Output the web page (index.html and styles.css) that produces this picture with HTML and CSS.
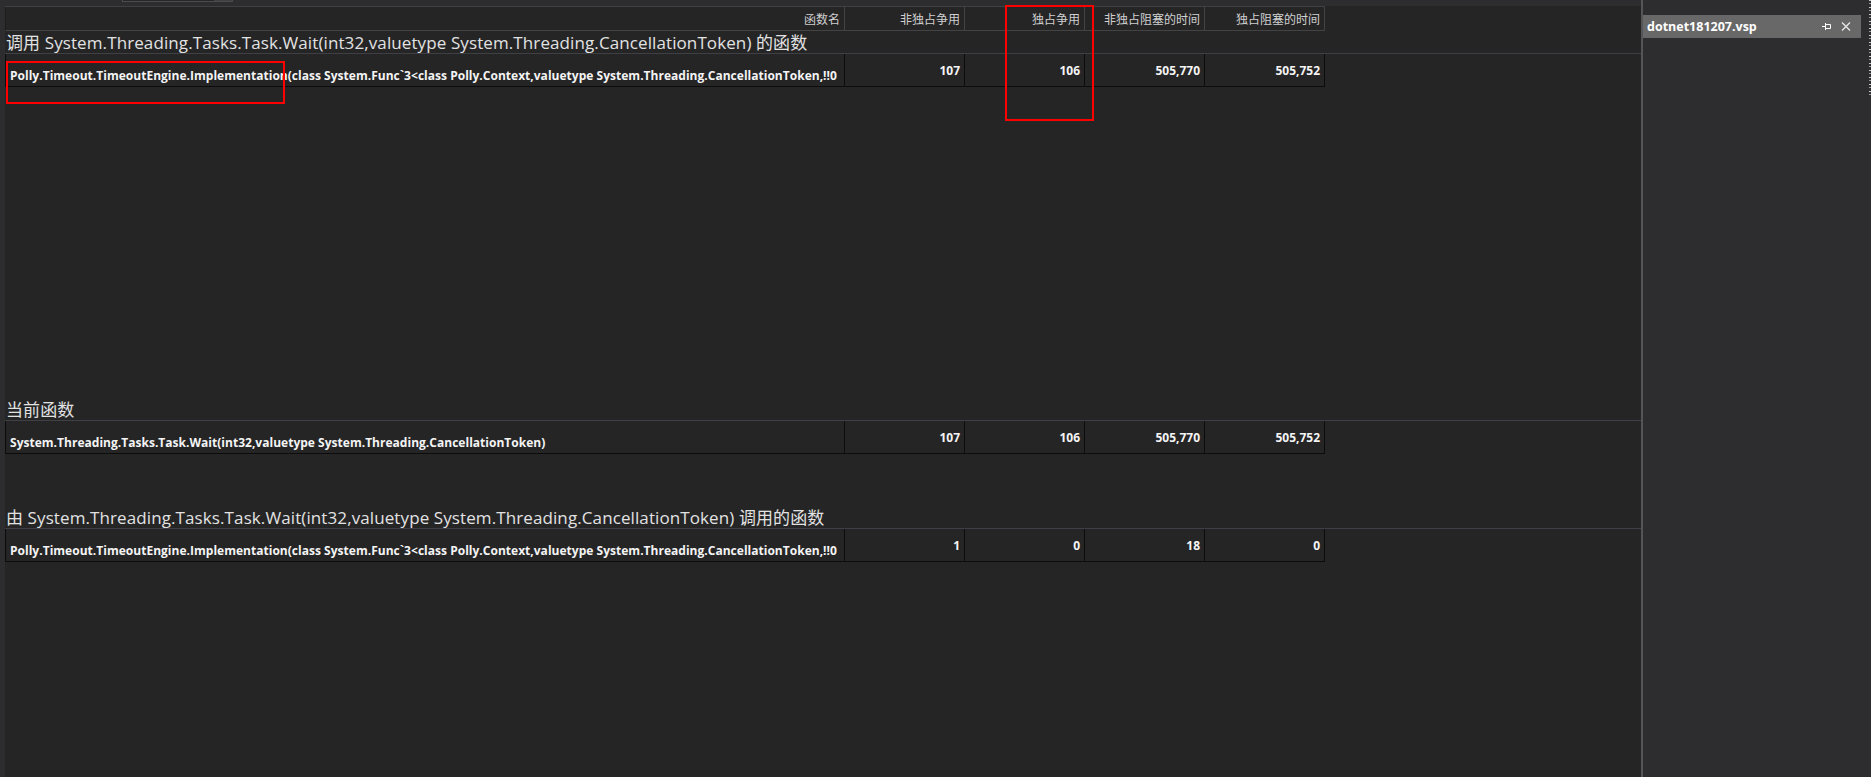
FILE: index.html
```html
<!DOCTYPE html>
<html lang="zh-CN">
<head>
<meta charset="utf-8">
<title>Contention view</title>
<link rel="stylesheet" href="styles.css">
</head>
<body>
<div class="app">
  <div class="main">
    <div class="topstrip"><div class="hscroll"><span class="hthumb"></span></div></div>
    <div class="mainbody">
      <div class="leftstrip"></div>
      <div class="content">
        <div class="grid header">
          <div class="hcell first">函数名</div>
          <div class="hcell">非独占争用</div>
          <div class="hcell">独占争用</div>
          <div class="hcell">非独占阻塞的时间</div>
          <div class="hcell">独占阻塞的时间</div>
        </div>

        <section class="sec sec1">
          <div class="title">调用 System.Threading.Tasks.Task.Wait(int32,valuetype System.Threading.CancellationToken) 的函数</div>
          <div class="grid row">
            <div class="ncell">Polly.Timeout.TimeoutEngine.Implementation(class System.Func`3&lt;class Polly.Context,valuetype System.Threading.CancellationToken,!!0</div>
            <div class="vcell">107</div>
            <div class="vcell">106</div>
            <div class="vcell">505,770</div>
            <div class="vcell">505,752</div>
          </div>
        </section>

        <section class="sec sec2">
          <div class="title">当前函数</div>
          <div class="grid row">
            <div class="ncell">System.Threading.Tasks.Task.Wait(int32,valuetype System.Threading.CancellationToken)</div>
            <div class="vcell">107</div>
            <div class="vcell">106</div>
            <div class="vcell">505,770</div>
            <div class="vcell">505,752</div>
          </div>
        </section>

        <section class="sec sec3">
          <div class="title">由 System.Threading.Tasks.Task.Wait(int32,valuetype System.Threading.CancellationToken) 调用的函数</div>
          <div class="grid row">
            <div class="ncell">Polly.Timeout.TimeoutEngine.Implementation(class System.Func`3&lt;class Polly.Context,valuetype System.Threading.CancellationToken,!!0</div>
            <div class="vcell">1</div>
            <div class="vcell">0</div>
            <div class="vcell">18</div>
            <div class="vcell">0</div>
          </div>
        </section>
      </div>
    </div>
  </div>
  <div class="divider"></div>
  <aside class="panel">
    <div class="panel-col">
      <div class="panel-title">
        <span class="panel-name">dotnet181207.vsp</span>
        <span class="panel-icons">
          <svg class="ico-pin" width="9" height="7" viewBox="0 0 9 7"><path d="M0 3.5H3.5M3.5 0V7M3.5 1.5H8.5V5.5H3.5" fill="none" stroke="#fff" stroke-width="1"/></svg>
          <svg class="ico-close" width="10" height="9" viewBox="0 0 10 9"><path d="M1 0.5L9 8.5M9 0.5L1 8.5" fill="none" stroke="#e8e8e8" stroke-width="1.3"/></svg>
        </span>
      </div>
    </div>
    <div class="marks"></div>
  </aside>
</div>
<div class="annot annot-name"></div>
<div class="annot annot-col"></div>
</body>
</html>
```

FILE: styles.css
```css
* { box-sizing: border-box; }
html, body { margin: 0; padding: 0; }
body {
  width: 1871px;
  height: 777px;
  overflow: hidden;
  background: #252526;
  font-family: "Open Sans", "Noto Sans CJK SC", sans-serif;
  color: #dcdcdc;
  position: relative;
}
.app {
  display: flex;
  height: 777px;
}
.main {
  width: 1641px;
  display: flex;
  flex-direction: column;
}
.topstrip {
  height: 6px;
  background: #2d2d30;
  display: flex;
}
.hscroll {
  margin-left: 122px;
  width: 111px;
  height: 2px;
  border: 1px solid #4a4a4f;
  border-top: 0;
  background: #262628;
  display: flex;
  justify-content: flex-end;
}
.hthumb {
  width: 18px;
  background: #3e3e42;
}
.mainbody {
  flex: 1;
  display: flex;
}
.leftstrip {
  width: 5px;
  background: #2d2d30;
}
.content {
  flex: 1;
  display: flex;
  flex-direction: column;
}
.grid {
  display: grid;
  grid-template-columns: 840px repeat(4, 120px);
  width: 1320px;
}
.header {
  border-top: 1px solid #3f3f46;
}
.hcell {
  height: 24px;
  border-right: 1px solid #434346;
  border-bottom: 1px solid #434346;
  font-size: 12px;
  line-height: 23px;
  text-align: right;
  padding-right: 4px;
  color: #d0d0d0;
  font-family: "Noto Sans CJK SC", sans-serif;
}
.hcell.first { border-left: 1px solid #1c1c1c; }

.sec { display: flex; flex-direction: column; }
.sec1 { height: 367px; }
.sec2 { height: 108px; }
.sec3 { flex: 1; }
.title {
  height: 23px;
  border-bottom: 1px solid #3f3f46;
  font-size: 17px;
  letter-spacing: 0.1px;
  line-height: 22px;
  padding-left: 1px;
  padding-top: 1px;
  white-space: nowrap;
  color: #e2e2e2;
}
.row {
  height: 33px;
}
.ncell, .vcell {
  border-right: 1px solid #0c0c0c;
  border-bottom: 1px solid #0c0c0c;
  font-weight: 700;
  color: #f4f4f4;
  white-space: nowrap;
  overflow: hidden;
}
.ncell {
  border-left: 1px solid #0c0c0c;
  display: flex;
  align-items: flex-end;
  padding-left: 4px;
  padding-bottom: 3px;
  line-height: 14px;
  font-size: 12px;
  letter-spacing: 0.02px;
}
.vcell {
  text-align: right;
  padding-right: 4px;
  padding-top: 9px;
  line-height: 15px;
  font-size: 12px;
}

.divider {
  width: 2px;
  background: #555558;
}
.panel {
  flex: 1;
  background: #2d2d30;
  display: flex;
}
.panel-col {
  flex: 1;
  padding-top: 15px;
}
.panel-title {
  width: 218px;
  height: 23px;
  background: #686868;
  display: flex;
  align-items: center;
  justify-content: space-between;
  padding-left: 4px;
  padding-right: 10px;
}
.panel-name {
  font-weight: 700;
  font-size: 12.5px;
  color: #ffffff;
}
.panel-icons {
  display: flex;
  align-items: center;
  gap: 10px;
}
.ico-pin { display: block; }
.ico-close { display: block; }
.marks {
  width: 2px;
  height: 98px;
  background: repeating-linear-gradient(to bottom, #c8c8c8 0 1px, transparent 1px 3px, #9a9a9a 3px 4px, transparent 4px 7px);
}

.annot {
  position: absolute;
  border: 2px solid #ff0000;
  pointer-events: none;
}
.annot-name { left: 6px; top: 61px; width: 279px; height: 43px; }
.annot-col { left: 1005px; top: 5px; width: 89px; height: 116px; }
```
